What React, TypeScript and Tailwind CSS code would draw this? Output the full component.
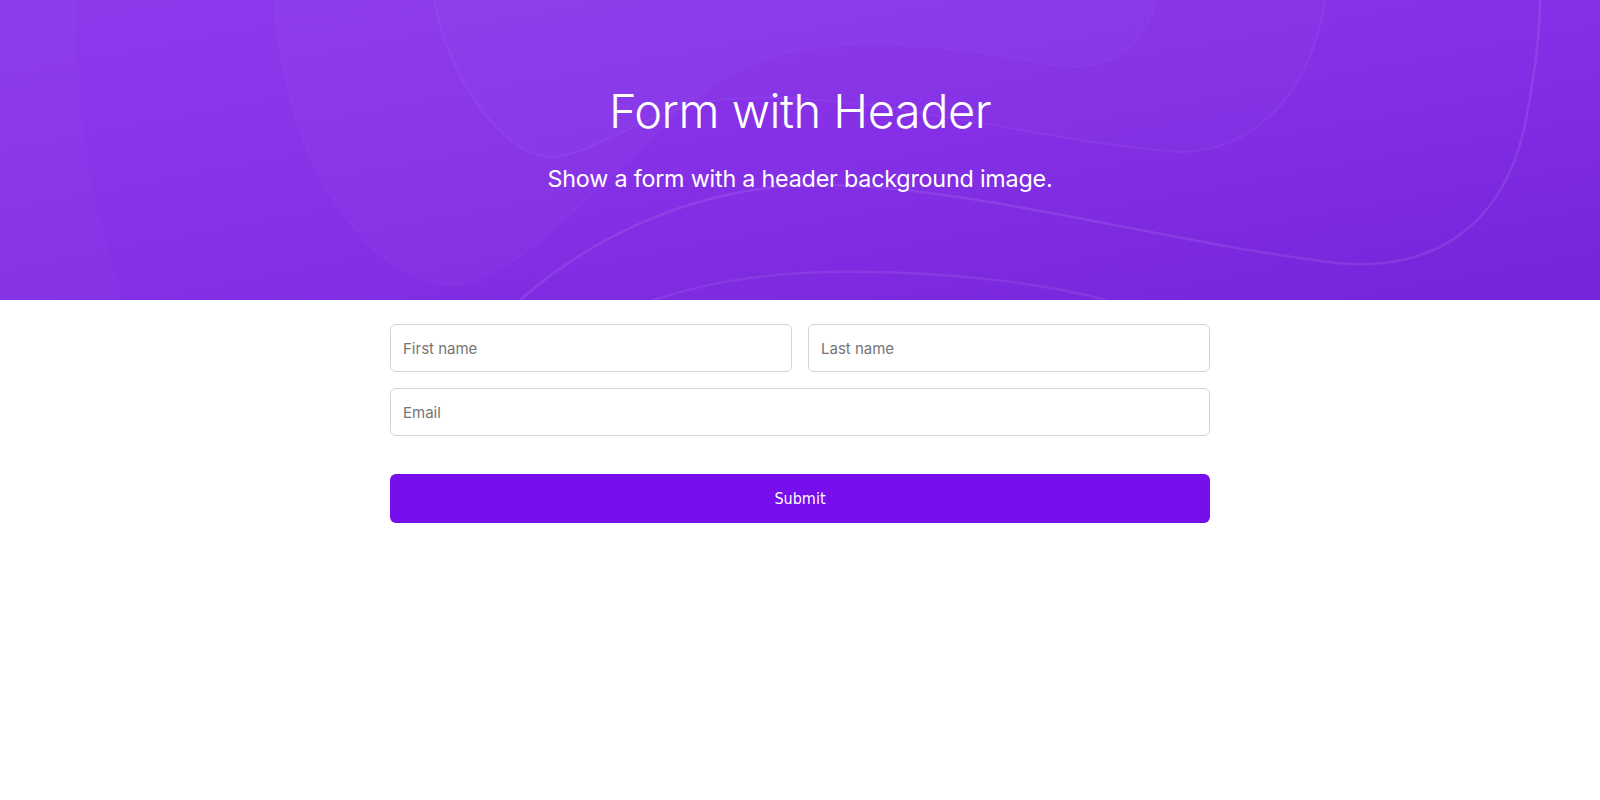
import React from "react";

function HeaderBg() {
  return (
    <svg
      className="absolute inset-0 h-full w-full"
      viewBox="0 0 1600 300"
      preserveAspectRatio="none"
      xmlns="http://www.w3.org/2000/svg"
    >
      <defs>
        <linearGradient id="bg" x1="0" y1="0" x2="1" y2="1" gradientUnits="objectBoundingBox">
          <stop offset="0" stopColor="#8d3aed" />
          <stop offset="0.5" stopColor="#8530e6" />
          <stop offset="1" stopColor="#7524d9" />
        </linearGradient>
      </defs>
      <rect x="0" y="0" width="1600" height="300" fill="url(#bg)" />
      <path d="M77 0 C 75 120, 95 220, 125 300 L 0 300 L 0 0 Z" fill="#ffffff" fillOpacity="0.015" />
      <path
        d="M275 0 C 280 150, 360 270, 440 285 C 520 295, 620 150, 720 80 C 820 20, 960 50, 1065 67 C 1120 70, 1145 40, 1157 0 Z"
        fill="#ffffff"
        fillOpacity="0.025"
      />
      <path
        d="M275 0 C 280 150, 360 270, 440 285 C 520 295, 620 150, 720 80 C 820 20, 960 50, 1065 67 C 1120 70, 1145 40, 1157 0"
        fill="none"
        stroke="#ffffff"
        strokeOpacity="0.025"
        strokeWidth="2"
      />
      <path
        d="M434 0 C 450 80, 500 150, 546 157 C 590 160, 640 110, 720 100 C 850 85, 1050 145, 1183 152 C 1250 150, 1310 100, 1325 0"
        fill="none"
        stroke="#ffffff"
        strokeOpacity="0.05"
        strokeWidth="2"
      />
      <path
        d="M434 0 C 450 80, 500 150, 546 157 C 590 160, 640 110, 720 100 C 850 85, 1050 145, 1183 152 C 1250 150, 1310 100, 1325 0 Z"
        fill="#ffffff"
        fillOpacity="0.015"
      />
      <path
        d="M520 300 C 600 230, 700 190, 800 185 C 950 180, 1150 240, 1336 263 C 1430 272, 1500 230, 1524 130 C 1536 70, 1540 25, 1540 0"
        fill="none"
        stroke="#ffffff"
        strokeOpacity="0.09"
        strokeWidth="2.5"
      />
      <path
        d="M653 300 C 700 285, 750 274, 830 272 C 950 270, 1050 285, 1106 300"
        fill="none"
        stroke="#ffffff"
        strokeOpacity="0.08"
        strokeWidth="2.5"
      />
    </svg>
  );
}

export default function App() {
  const sans = { fontFamily: "Inter, 'Noto Sans', sans-serif" };
  return (
    <div className="min-h-[800px] w-full bg-white" style={sans}>
      <header className="relative flex h-[300px] flex-col items-center overflow-hidden pt-[83px] text-white">
        <HeaderBg />
        <h1 className="relative text-[47px] font-light leading-[56px] tracking-[-0.5px]">
          Form with Header
        </h1>
        <p className="relative mt-[25px] text-[23.3px] font-normal leading-[30px] tracking-[-0.2px]">
          Show a form with a header background image.
        </p>
      </header>
      <form className="mx-auto flex w-[820px] flex-col pt-[24px]">
        <div className="flex gap-4">
          <input
            type="text"
            placeholder="First name"
            className="h-[48px] flex-1 rounded-md border border-[#d4d4d8] px-3 text-[15px] text-gray-800 outline-none placeholder:text-[#757575]"
          />
          <input
            type="text"
            placeholder="Last name"
            className="h-[48px] flex-1 rounded-md border border-[#d4d4d8] px-3 text-[15px] text-gray-800 outline-none placeholder:text-[#757575]"
          />
        </div>
        <input
          type="email"
          placeholder="Email"
          className="mt-4 h-[48px] w-full rounded-md border border-[#d4d4d8] px-3 text-[15px] text-gray-800 outline-none placeholder:text-[#757575]"
        />
        <button
          type="button"
          className="mt-[38px] h-[49px] w-full rounded-md bg-[#770eec] text-[16px] text-white"
          style={{ fontFamily: "'DejaVu Sans Condensed', 'DejaVu Sans', sans-serif" }}
        >
          Submit
        </button>
      </form>
    </div>
  );
}
